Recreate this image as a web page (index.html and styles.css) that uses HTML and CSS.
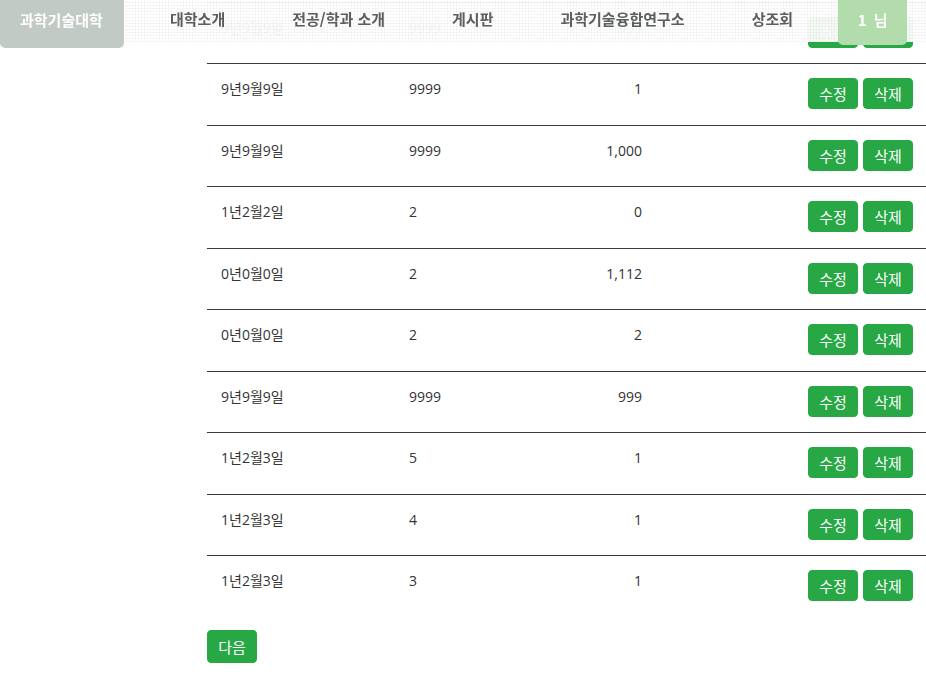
FILE: index.html
```html
<!DOCTYPE html>
<html lang="ko">
<head>
<meta charset="utf-8">
<title>과학기술대학</title>
<link rel="stylesheet" href="styles.css">
</head>
<body>
<header class="nav">
  <a class="brand">과학기술대학</a>
  <ul class="menu">
    <li>대학소개</li>
    <li>전공/학과 소개</li>
    <li>게시판</li>
    <li>과학기술융합연구소</li>
    <li>상조회</li>
  </ul>
  <a class="user">1 님</a>
</header>
<main class="main">
  <div class="list">
    <div class="row"><span class="c-date">9년9월9일</span><span class="c-num">9999</span><span class="c-val">999</span><span class="c-act"><button class="btn">수정</button><button class="btn">삭제</button></span></div>
    <div class="row"><span class="c-date">9년9월9일</span><span class="c-num">9999</span><span class="c-val">1</span><span class="c-act"><button class="btn">수정</button><button class="btn">삭제</button></span></div>
    <div class="row"><span class="c-date">9년9월9일</span><span class="c-num">9999</span><span class="c-val">1,000</span><span class="c-act"><button class="btn">수정</button><button class="btn">삭제</button></span></div>
    <div class="row"><span class="c-date">1년2월2일</span><span class="c-num">2</span><span class="c-val">0</span><span class="c-act"><button class="btn">수정</button><button class="btn">삭제</button></span></div>
    <div class="row"><span class="c-date">0년0월0일</span><span class="c-num">2</span><span class="c-val">1,112</span><span class="c-act"><button class="btn">수정</button><button class="btn">삭제</button></span></div>
    <div class="row"><span class="c-date">0년0월0일</span><span class="c-num">2</span><span class="c-val">2</span><span class="c-act"><button class="btn">수정</button><button class="btn">삭제</button></span></div>
    <div class="row"><span class="c-date">9년9월9일</span><span class="c-num">9999</span><span class="c-val">999</span><span class="c-act"><button class="btn">수정</button><button class="btn">삭제</button></span></div>
    <div class="row"><span class="c-date">1년2월3일</span><span class="c-num">5</span><span class="c-val">1</span><span class="c-act"><button class="btn">수정</button><button class="btn">삭제</button></span></div>
    <div class="row"><span class="c-date">1년2월3일</span><span class="c-num">4</span><span class="c-val">1</span><span class="c-act"><button class="btn">수정</button><button class="btn">삭제</button></span></div>
    <div class="row"><span class="c-date">1년2월3일</span><span class="c-num">3</span><span class="c-val">1</span><span class="c-act"><button class="btn">수정</button><button class="btn">삭제</button></span></div>
  </div>
  <button class="btn btn-next">다음</button>
</main>
</body>
</html>
```
FILE: styles.css
```css
html, body {
  margin: 0;
  padding: 0;
  background: #fff;
  overflow: hidden;
}
body {
  font-family: "Open Sans", "Noto Sans CJK KR", sans-serif;
  font-size: 14px;
  color: #333;
}
.nav {
  position: fixed;
  top: 0;
  left: 0;
  right: 0;
  height: 42px;
  display: flex;
  align-items: flex-start;
  z-index: 10;
  background-color: rgba(255, 255, 255, 0.95);
  background-image:
    repeating-linear-gradient(0deg, rgba(0,0,0,0.03) 0 1px, transparent 1px 3px),
    repeating-linear-gradient(90deg, rgba(0,0,0,0.03) 0 1px, transparent 1px 3px);
  font-family: "Noto Sans CJK KR", sans-serif;
  font-weight: bold;
  font-size: 15px;
}
.brand {
  width: 124px;
  height: 48px;
  box-sizing: border-box;
  padding-left: 20px;
  line-height: 39px;
  background: #c1cac5;
  color: #fff;
  border-radius: 0 0 5px 5px;
  flex: none;
}
.menu {
  list-style: none;
  margin: 0 0 0 46px;
  padding: 0;
  display: flex;
  gap: 67px;
  color: #5a5f5c;
  line-height: 38px;
}
.menu li {
  white-space: nowrap;
}
.user {
  margin-left: 45px;
  width: 69px;
  height: 45px;
  line-height: 39px;
  text-align: center;
  background: #b2dcab;
  color: #fff;
  border-radius: 0 0 5px 5px;
  flex: none;
  word-spacing: 3px;
}
.main {
  padding: 1.5px 0 0 207px;
}
.list {
  display: flex;
  flex-direction: column;
}
.row {
  height: 61.5px;
  box-sizing: border-box;
  border-top: 1px solid #3a3a3a;
  display: grid;
  grid-template-columns: 188px 131px 102px 1fr;
  align-items: start;
  padding: 14px 13px 0 14px;
  line-height: 21px;
}
.c-val { text-align: right; }
.c-act {
  display: flex;
  justify-content: flex-end;
  gap: 5px;
}
.btn {
  font-family: "Noto Sans CJK KR", sans-serif;
  font-size: 15px;
  line-height: 21px;
  height: 31px;
  width: 50px;
  padding: 0;
  border: 1px solid #28a745;
  background: #28a745;
  color: #fff;
  border-radius: 4px;
}
.btn-next {
  margin-top: 13.5px;
  height: 33px;
}
```
